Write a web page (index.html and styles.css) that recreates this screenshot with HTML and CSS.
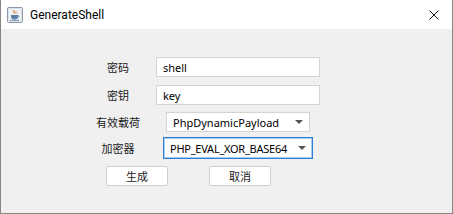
FILE: index.html
```html
<!DOCTYPE html>
<html>
<head>
<meta charset="utf-8">
<link rel="stylesheet" href="styles.css">
</head>
<body>
<div class="window">
  <div class="titlebar">
    <svg class="app-icon" width="16" height="16" viewBox="0 0 16 16">
      <rect x="0.5" y="0.5" width="15" height="15" rx="1" fill="#dde3ea" stroke="#8c98a8"/>
      <rect x="2" y="2" width="12" height="12" fill="#eef1f5"/>
      <path d="M7 3.5c-1 1 .8 1.6 0 3" stroke="#e2701e" stroke-width="1.1" fill="none"/>
      <path d="M9 4.5c-.8.8.6 1.2 0 2.2" stroke="#e2701e" stroke-width="1" fill="none"/>
      <path d="M4 8h7v1.5c0 2-1.5 3-3.5 3S4 11.5 4 9.5z" fill="#5b7fa8"/>
      <path d="M11 8.6c1.4 0 1.4 2-.3 2" stroke="#5b7fa8" stroke-width="0.9" fill="none"/>
      <rect x="3" y="12.8" width="9" height="0.9" fill="#5b7fa8"/>
    </svg>
    <span class="title">GenerateShell</span>
    <svg class="close" width="10" height="10" viewBox="0 0 10 10">
      <path d="M0.5 0.5L9.5 9.5M9.5 0.5L0.5 9.5" stroke="#1a1a1a" stroke-width="1"/>
    </svg>
  </div>
  <div class="content">
    <div class="form">
      <span class="label">密码</span>
      <div class="field f-text">shell</div>
      <span class="label">密钥</span>
      <div class="field f-text">key</div>
      <span class="label">有效载荷</span>
      <div class="field combo c1"><span>PhpDynamicPayload</span><i class="arrow"></i></div>
      <span class="label">加密器</span>
      <div class="field combo c2 focused"><span>PHP_EVAL_XOR_BASE64</span><i class="arrow"></i></div>
    </div>
    <div class="buttons">
      <div class="btn b1">生成</div>
      <div class="btn b2">取消</div>
    </div>
  </div>
</div>
</body>
</html>
```
FILE: styles.css
```css
* { box-sizing: border-box; }
html, body { margin: 0; padding: 0; background: #f0f0f0; }
body { font-family: "Noto Sans", "Noto Sans CJK SC", sans-serif; font-size: 11px; color: #1a1a1a; }
.window {
  width: 453px; height: 214px;
  border: 1px solid #858585; border-top: none;
  background: #f0f0f0;
  display: flex; flex-direction: column;
}
.titlebar {
  height: 29px; background: #fff;
  display: flex; align-items: center;
  padding: 0 13px 0 6px;
}
.app-icon { margin-top: 1px; }
.title { margin-left: 7px; font-family: Roboto, sans-serif; font-size: 12px; color: #000; flex: 1; }
.close { margin-top: 0; }
.content { flex: 1; padding-top: 28px; padding-left: 79px; }
.form {
  display: grid;
  grid-template-columns: 76px 164px;
  grid-template-rows: 28px 27px 26px 29px;
  justify-items: center;
  align-items: start;
}
.label { height: 20px; line-height: 20px; font-family: "Noto Sans CJK SC", sans-serif; font-size: 11px; color: #1a1a1a; }
.field {
  height: 20px; background: #fff;
  border: 1px solid #d4d4d4;
  display: flex; align-items: center;
  font-size: 11px; color: #000;
}
.f-text { width: 164px; padding-left: 6px; }
.combo { justify-content: space-between; padding: 0 6px 0 6px; }
.c1 { width: 144px; }
.c2 { width: 150px; height: 22px; margin-top: -1px; letter-spacing: -0.25px; }
.focused { border: 1px solid #2b7fd6; box-shadow: inset 0 0 0 1px #a8cbef; }
.arrow {
  width: 0; height: 0;
  border-left: 4px solid transparent; border-right: 4px solid transparent;
  border-top: 4px solid #555;
}
.buttons { display: flex; padding-left: 26px; gap: 41px; margin-top: -1px; }
.btn {
  width: 62px; height: 20px;
  background: #fff; border: 1px solid #cfcfcf; border-radius: 2px;
  display: flex; align-items: center; justify-content: center;
  font-family: "Noto Sans CJK SC", sans-serif; font-size: 11px; color: #1a1a1a;
}
```
